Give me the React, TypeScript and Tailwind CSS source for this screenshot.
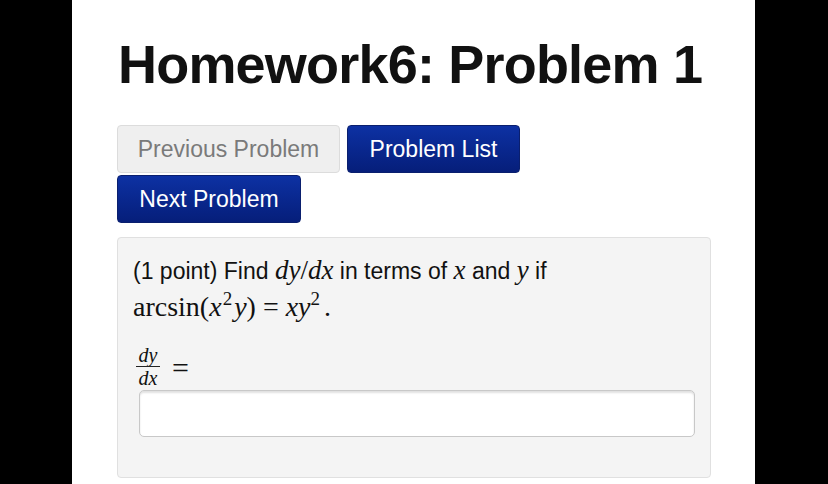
import React from "react";

const serif = "font-['Liberation_Serif','Times_New_Roman',serif]";

export default function App() {
  return (
    <div className="w-[828px] h-[484px] bg-black flex overflow-hidden">
      <div className="ml-[72px] w-[683px] h-full bg-white flex flex-col pl-[45px] pr-[44px]">
        <h1 className="mt-[37px] ml-[1px] whitespace-nowrap text-[54px] leading-[54px] tracking-[-0.8px] font-bold text-[#111] font-['Liberation_Sans',Arial,sans-serif]">
          Homework6: Problem 1
        </h1>
        <div className="mt-[34px] flex flex-col gap-[2px] font-['Liberation_Sans',Arial,sans-serif]">
          <div className="flex gap-[7px]">
            <div className="w-[223px] h-[48px] rounded-[4px] border border-[#dcdcdc] bg-[#efefef] flex items-center justify-center text-[23px] text-[#7a7a7a]">
              Previous Problem
            </div>
            <div className="w-[173px] h-[48px] rounded-[4px] border border-[#0a1f6e] bg-gradient-to-b from-[#0d31a3] to-[#061e7a] flex items-center justify-center text-[23px] text-white">
              Problem List
            </div>
          </div>
          <div className="w-[184px] h-[48px] rounded-[4px] border border-[#0a1f6e] bg-gradient-to-b from-[#0d31a3] to-[#061e7a] flex items-center justify-center text-[23px] text-white">
            Next Problem
          </div>
        </div>
        <div className="mt-[14px] w-[594px] h-[241px] shrink-0 rounded-[4px] border border-[#e0e0e0] bg-[#f4f4f4] pl-[15px] pr-[15px] pt-[19px]">
          <div className="text-[23px] leading-[26px] h-[26px] whitespace-nowrap text-[#111] font-['Liberation_Sans',Arial,sans-serif]">
            (1 point) Find{" "}
            <span className={`${serif} italic text-[27px] leading-none`}>dy</span>
            <span className={`${serif} text-[27px] leading-none`}>/</span>
            <span className={`${serif} italic text-[27px] leading-none`}>dx</span>{" "}
            in terms of{" "}
            <span className={`${serif} italic text-[27px] leading-none`}>x</span> and{" "}
            <span className={`${serif} italic text-[27px] leading-none`}>y</span> if
          </div>
          <div className={`mt-[7px] h-[34px] text-[28px] leading-[34px] text-[#111] whitespace-nowrap ${serif}`}>
            arcsin(<i>x</i>
            <sup className="text-[19px] relative top-[-11px] ml-[1px] mr-[2px]">2</sup>
            <i>y</i>) = <i>xy</i>
            <sup className="text-[19px] relative top-[-11px]">2</sup>
            <span className="ml-[4px]">.</span>
          </div>
          <div className={`mt-[21px] ml-[3px] flex items-center gap-[12px] ${serif} text-[#111]`}>
            <div className="flex flex-col items-center w-[24px]">
              <span className="italic text-[20px] leading-[20px]">dy</span>
              <span className="w-full h-[1px] bg-[#222] my-[1px]"></span>
              <span className="italic text-[20px] leading-[20px]">dx</span>
            </div>
            <span className="text-[30px] leading-[30px] mt-[2px]">=</span>
          </div>
          <div className="mt-[2px] ml-[6px] w-[556px] h-[47px] rounded-[5px] border border-[#c8c8c8] bg-white shadow-[inset_0_2px_2px_rgba(0,0,0,0.12)]"></div>
        </div>
      </div>
    </div>
  );
}
